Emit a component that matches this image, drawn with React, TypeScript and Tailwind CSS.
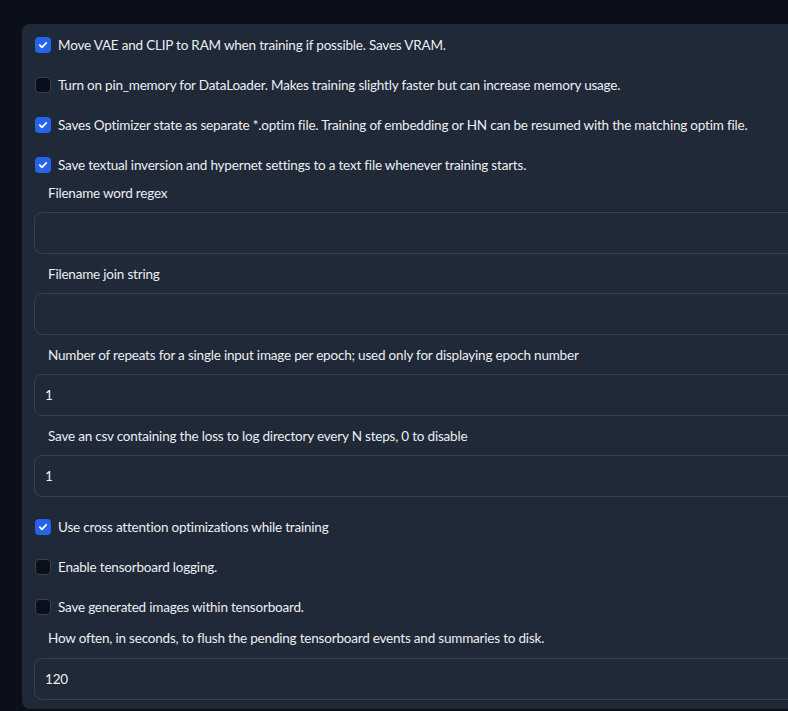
import React from "react";

type Item =
  | { kind: "check"; label: string; checked: boolean }
  | { kind: "field"; label: string; value: string };

const items: Item[] = [
  { kind: "check", label: "Move VAE and CLIP to RAM when training if possible. Saves VRAM.", checked: true },
  { kind: "check", label: "Turn on pin_memory for DataLoader. Makes training slightly faster but can increase memory usage.", checked: false },
  { kind: "check", label: "Saves Optimizer state as separate *.optim file. Training of embedding or HN can be resumed with the matching optim file.", checked: true },
  { kind: "check", label: "Save textual inversion and hypernet settings to a text file whenever training starts.", checked: true },
  { kind: "field", label: "Filename word regex", value: "" },
  { kind: "field", label: "Filename join string", value: "" },
  { kind: "field", label: "Number of repeats for a single input image per epoch; used only for displaying epoch number", value: "1" },
  { kind: "field", label: "Save an csv containing the loss to log directory every N steps, 0 to disable", value: "1" },
  { kind: "check", label: "Use cross attention optimizations while training", checked: true },
  { kind: "check", label: "Enable tensorboard logging.", checked: false },
  { kind: "check", label: "Save generated images within tensorboard.", checked: false },
  { kind: "field", label: "How often, in seconds, to flush the pending tensorboard events and summaries to disk.", value: "120" },
];

function Checkbox({ checked }: { checked: boolean }) {
  if (checked) {
    return (
      <span className="w-4 h-4 rounded-[4px] bg-[#2563eb] flex items-center justify-center shrink-0">
        <svg width="10" height="10" viewBox="0 0 10 10" fill="none">
          <path d="M1.8 5.2 L4 7.3 L8.2 2.8" stroke="white" strokeWidth="1.8" strokeLinecap="round" strokeLinejoin="round" />
        </svg>
      </span>
    );
  }
  return <span className="w-4 h-4 rounded-[4px] bg-[#0b0f19] border border-[#374151] shrink-0" />;
}

export default function App() {
  return (
    <div
      className="min-h-[711px] w-[788px] overflow-hidden bg-[#0b0f19] pt-6 pl-[22px] text-[13.5px] tracking-[-0.2px] text-[#eceef2]"
      style={{ fontFamily: "Lato, 'Noto Sans', sans-serif" }}
    >
      <div className="w-[800px] bg-[#1f2937] rounded-lg px-3 pt-px pb-[9px]">
        {items.map((it, i) => {
          const prev = items[i - 1];
          if (it.kind === "check") {
            return (
              <label
                key={i}
                className={`flex items-center gap-[7px] h-10 pl-px whitespace-nowrap ${prev && prev.kind === "field" ? "mt-[10px]" : ""}`}
              >
                <Checkbox checked={it.checked} />
                <span>{it.label}</span>
              </label>
            );
          }
          const last = i === items.length - 1;
          return (
            <div key={i} className={prev && prev.kind === "field" ? "mt-[10px]" : last ? "mt-px" : "-mt-[2px]"}>
              <div className="h-5 leading-5 pl-[14px] whitespace-nowrap">{it.label}</div>
              <div
                className={`${last ? "mt-[10px]" : "mt-[9px]"} h-[42px] border border-[#374151] rounded-lg flex items-center px-[10px]`}
              >
                {it.value}
              </div>
            </div>
          );
        })}
      </div>
    </div>
  );
}
